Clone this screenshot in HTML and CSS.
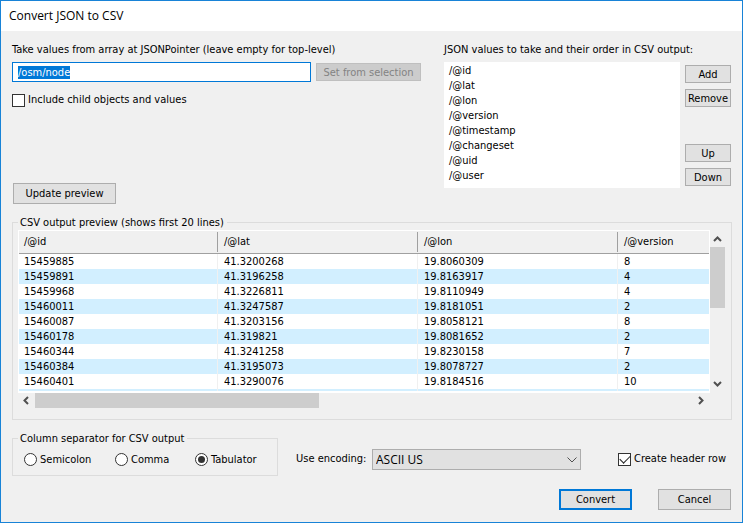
FILE: index.html
```html
<!DOCTYPE html>
<html lang="en">
<head>
    <meta charset="UTF-8">
    <meta name="viewport" content="width=device-width, initial-scale=1.0">
    <title>Convert JSON to CSV</title>
    <link rel="stylesheet" href="styles.css">
</head>
<body>
    <div class="dialog">
        <h1 class="title-bar">Convert JSON to CSV</h1>

        <form class="content">
            <div class="top">
                <div class="source">
                    <label class="caption" for="pointer">Take values from array at JSONPointer (leave empty for top-level)</label>
                    <div class="pointer-row">
                        <input type="text" id="pointer" value="/osm/node" autofocus>
                        <button type="button" class="btn set-btn" disabled>Set from selection</button>
                    </div>
                    <label class="check">
                        <input type="checkbox" id="include-children">
                        Include child objects and values
                    </label>
                    <button type="button" class="btn update-btn">Update preview</button>
                </div>

                <div class="values">
                    <label class="caption" for="values-list">JSON values to take and their order in CSV output:</label>
                    <div class="values-row">
                        <select id="values-list" class="values-list" size="8">
                            <option>/@id</option>
                            <option>/@lat</option>
                            <option>/@lon</option>
                            <option>/@version</option>
                            <option>/@timestamp</option>
                            <option>/@changeset</option>
                            <option>/@uid</option>
                            <option>/@user</option>
                        </select>
                        <div class="side-buttons">
                            <button type="button" class="btn">Add</button>
                            <button type="button" class="btn">Remove</button>
                            <button type="button" class="btn up-btn">Up</button>
                            <button type="button" class="btn">Down</button>
                        </div>
                    </div>
                </div>
            </div>

            <fieldset class="group preview">
                <legend>CSV output preview (shows first 20 lines)</legend>
                <div class="grid">
                    <div class="grid-view">
                        <table>
                            <thead>
                                <tr><th>/@id</th><th>/@lat</th><th>/@lon</th><th>/@version</th></tr>
                            </thead>
                            <tbody>
                                <tr><td>15459885</td><td>41.3200268</td><td>19.8060309</td><td>8</td></tr>
                                <tr><td>15459891</td><td>41.3196258</td><td>19.8163917</td><td>4</td></tr>
                                <tr><td>15459968</td><td>41.3226811</td><td>19.8110949</td><td>4</td></tr>
                                <tr><td>15460011</td><td>41.3247587</td><td>19.8181051</td><td>2</td></tr>
                                <tr><td>15460087</td><td>41.3203156</td><td>19.8058121</td><td>8</td></tr>
                                <tr><td>15460178</td><td>41.319821</td><td>19.8081652</td><td>2</td></tr>
                                <tr><td>15460344</td><td>41.3241258</td><td>19.8230158</td><td>7</td></tr>
                                <tr><td>15460384</td><td>41.3195073</td><td>19.8078727</td><td>2</td></tr>
                                <tr><td>15460401</td><td>41.3290076</td><td>19.8184516</td><td>10</td></tr>
                                <tr><td></td><td></td><td></td><td></td></tr>
                            </tbody>
                        </table>
                    </div>
                    <div class="scrollbar vertical">
                        <svg class="arrow" viewBox="0 0 15 17"><path d="M4 11 7.500 7.500 11 11"/></svg>
                        <div class="thumb"></div>
                        <svg class="arrow" viewBox="0 0 15 17"><path d="M4 6 7.500 9.500 11 6"/></svg>
                    </div>
                    <div class="scrollbar horizontal">
                        <svg class="arrow" viewBox="0 0 17 15"><path d="M10 4 6.500 7.500 10 11"/></svg>
                        <div class="thumb"></div>
                        <svg class="arrow" viewBox="0 0 17 15"><path d="M6 4 9.500 7.500 6 11"/></svg>
                    </div>
                </div>
            </fieldset>

            <div class="options">
                <fieldset class="group separator">
                    <legend>Column separator for CSV output</legend>
                    <div class="radios">
                        <label class="check"><input type="radio" name="separator" value="semicolon">Semicolon</label>
                        <label class="check"><input type="radio" name="separator" value="comma">Comma</label>
                        <label class="check"><input type="radio" name="separator" value="tab" checked>Tabulator</label>
                    </div>
                </fieldset>
                <div class="output-options">
                    <label class="encoding-label" for="encoding">Use encoding:</label>
                    <div class="combo">
                        <select id="encoding">
                            <option>ASCII US</option>
                        </select>
                        <svg class="chevron" viewBox="0 0 10 6"><path d="M.5.5 5 5 9.500.5"/></svg>
                    </div>
                    <label class="check header-check"><input type="checkbox" id="header-row" checked>Create header row</label>
                </div>
            </div>

            <div class="actions">
                <button type="button" class="btn default">Convert</button>
                <button type="button" class="btn">Cancel</button>
            </div>
        </form>
    </div>

    <script>
        document.getElementById('pointer').select();
    </script>
</body>
</html>
```
FILE: styles.css
```css
* {
    margin: 0;
    padding: 0;
    box-sizing: border-box;
}

body {
    font: 11px/16px Tahoma, 'DejaVu Sans Condensed', sans-serif;
    color: #000;
    white-space: nowrap;
}

input, button, select {
    font: inherit;
    color: inherit;
    border-radius: 0;
    appearance: none;
}

.dialog {
    min-height: 100vh;
    border: 1px solid #1883d7;
    background: #f0f0f0;
}

.title-bar {
    height: 30px;
    padding-left: 8px;
    background: #fff;
    font: 12px/30px 'Segoe UI', 'Open Sans', sans-serif;
}

.content {
    padding: 10px 10px 12px 11px;
}

.btn {
    height: 18px;
    padding-top: 1px;
    border: 1px solid #adadad;
    background: #e1e1e1;
    line-height: 16px;
    text-align: center;
}

.btn:disabled {
    border-color: #bfbfbf;
    background: #ccc;
    color: #838383;
}

/* source and value list */
.top {
    display: grid;
    grid-template-columns: 1fr 288px;
    gap: 23px;
}

.caption {
    display: block;
    margin-bottom: 3px;
    line-height: 18px;
}

.pointer-row {
    display: flex;
    align-items: center;
    gap: 5px;
    margin-bottom: 10px;
}

#pointer {
    flex: 1;
    min-width: 0;
    height: 20px;
    padding: 0 5px;
    border: 1px solid #0078d7;
    background: #fff;
    outline: none;
}

#pointer::selection {
    background: #0078d7;
    color: #fff;
}

.set-btn {
    width: 105px;
}

.check {
    display: flex;
    align-items: center;
    gap: 3px;
}

.check input {
    flex: none;
    display: grid;
    place-items: center;
    width: 13px;
    height: 13px;
    border: 1px solid #333;
    background: #fff;
}

.check input[type="checkbox"]:checked::before {
    content: "";
    width: 9px;
    height: 5px;
    margin-bottom: 3px;
    border: solid #222;
    border-width: 0 0 1px 1px;
    transform: rotate(-45deg);
}

.check input[type="radio"] {
    border-radius: 50%;
}

.check input[type="radio"]:checked::before {
    content: "";
    width: 7px;
    height: 7px;
    border-radius: 50%;
    background: #333;
}

.update-btn {
    width: 103px;
    height: 21px;
    margin: 75px 0 0 1px;
}

.values-row {
    display: flex;
    gap: 5px;
}

.values-list {
    flex: 1;
    height: 126px;
    padding: 2px 4px;
    border: none;
    background: #fff;
    overflow: hidden;
    outline: none;
}

.values-list option {
    min-height: 15px;
    padding: 0 1px;
    line-height: 15px;
}

.side-buttons {
    display: flex;
    flex-direction: column;
    gap: 6px;
    width: 47px;
    padding: 3px 1px 0 0;
}

.side-buttons .up-btn {
    margin-top: 31px;
}

/* preview table */
.group {
    border: 1px solid #dcdcdc;
}

.group legend {
    height: 16px;
    padding: 0 3px 0 2px;
    line-height: 18px;
}

.preview {
    margin-top: 10px;
    padding: 0 6px 11px 5px;
}

.grid {
    display: grid;
    grid-template-columns: 1fr 15px;
    grid-template-rows: 163px 15px;
}

.grid-view {
    overflow: hidden;
    border: 1px solid #fff;
    border-bottom-width: 2px;
    background: #fff;
}

table {
    width: 100%;
    border-collapse: separate;
    border-spacing: 0;
    table-layout: fixed;
}

th {
    height: 23px;
    padding: 0 0 0 5px;
    border-bottom: 1px solid #a0a0a0;
    background: linear-gradient(#a0a0a0, #a0a0a0) right center / 1px 20px no-repeat #f0f0f0;
    font-weight: normal;
    text-align: left;
}

td {
    height: 15px;
    padding: 0 0 0 5px;
    border-right: 1px solid #f0f0f0;
    line-height: 15px;
}

th:not(:last-child) {
    width: 200px;
}

th:first-child {
    width: 199px;
}

th + th, td + td {
    padding-left: 6px;
}

th:last-child {
    background: #f0f0f0;
}

td:last-child {
    border-right: none;
}

tbody tr:nth-child(even) {
    background: #d2efff;
}

.scrollbar {
    display: flex;
}

.vertical {
    flex-direction: column;
}

.arrow {
    width: 17px;
    height: 15px;
    fill: none;
    stroke: #505050;
    stroke-width: 2;
}

.vertical .arrow {
    width: 15px;
    height: 17px;
}

.thumb {
    width: 284px;
    background: #cdcdcd;
}

.vertical .thumb {
    width: 15px;
    height: 61px;
}

.arrow:last-child {
    margin-left: auto;
}

.vertical .arrow:last-child {
    margin: auto 0 0;
}

/* output options */
.options {
    display: flex;
    margin-top: 10px;
}

.separator {
    flex: none;
    width: 266px;
    padding: 5px 11px 7px;
}

.separator legend {
    margin-left: -6px;
}

.radios {
    display: grid;
    grid-template-columns: 91px 80px 1fr;
    height: 17px;
}

.output-options {
    flex: 1;
    display: flex;
    align-items: center;
    padding: 12px 6px 0 18px;
}

.encoding-label {
    width: 76px;
}

.combo {
    position: relative;
    width: 209px;
}

.combo select {
    display: block;
    width: 100%;
    height: 21px;
    padding: 0 20px 0 3px;
    border: 1px solid #adadad;
    background: #e1e1e1;
    font: 12px/19px 'Segoe UI', 'Open Sans', sans-serif;
}

.chevron {
    position: absolute;
    top: 8px;
    right: 4px;
    width: 10px;
    height: 6px;
    fill: none;
    stroke: #505050;
    pointer-events: none;
}

.header-check {
    margin-left: auto;
}

.actions {
    display: flex;
    justify-content: flex-end;
    gap: 26px;
    margin: 13px 1px 0 0;
}

.actions .btn {
    width: 73px;
    height: 21px;
}

.actions .default {
    border: 2px solid #0078d7;
}
```
